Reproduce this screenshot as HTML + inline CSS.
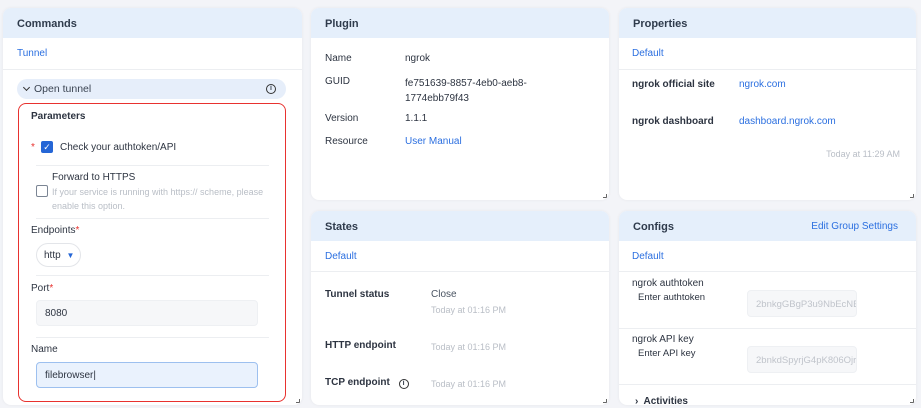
<!DOCTYPE html><html><head><meta charset="utf-8"><style>
*{box-sizing:border-box;margin:0;padding:0}
body{width:921px;height:408px;background:#f3f4f8;font-family:"Liberation Sans",sans-serif;font-size:10px;color:#2d3441;position:relative;overflow:hidden}
.p{position:absolute;background:#fff;border-radius:8px;overflow:hidden;box-shadow:0 0 3px rgba(0,0,0,.06)}
.h{height:30px;background:#e5effb;font-weight:bold;font-size:11px;color:#2f3b4c;padding:9px 14px 0;line-height:14px}
.a{position:absolute;white-space:nowrap;line-height:12px}
.b{color:#2b6fe0}
.g{color:#b9bec6;font-size:9px}
.d{position:absolute;height:1px;background:#eceef1}
.bold{font-weight:bold}
.in{position:absolute;border-radius:4px;background:#f6f7f9;border:1px solid #eef0f3}
.info{display:inline-block;width:10px;height:10px;border:1.3px solid #333;border-radius:50%;font-size:7px;text-align:center;line-height:8px;font-weight:bold}
.rz{position:absolute;right:2px;bottom:2px;width:4px;height:4px;border-right:1px solid #666;border-bottom:1px solid #666}
</style></head><body>

<div class="p" style="left:3px;top:8px;width:299px;height:397px">
<div class="h">Commands</div>
<div class="a b" style="left:14px;top:40px">Tunnel</div>
<div class="d" style="left:0;right:0;top:61px"></div>
<div class="a" style="left:14px;top:71px;width:269px;height:20px;background:#e6eefa;border-radius:10px;padding:4px 0 0 5px;color:#3b4452;font-size:10.5px"><span style="display:inline-block;width:5px;height:5px;border-right:1.5px solid #333;border-bottom:1.5px solid #333;transform:rotate(45deg);margin:0 5px 2px 2px"></span>Open tunnel<span class="info" style="position:absolute;right:10px;top:5px">i</span></div>
<div class="a" style="left:15px;top:95px;width:268px;height:299px;border:1.5px solid #e8322f;border-radius:8px"></div>
<div class="a bold" style="left:28px;top:103px">Parameters</div>
<div class="a" style="left:28px;top:134px;color:#e8322f">*</div>
<div class="a" style="left:38px;top:133px;width:12px;height:12px;background:#2566d6;border-radius:2px;color:#fff;font-size:9px;text-align:center;line-height:12px">✓</div>
<div class="a" style="left:57px;top:134px">Check your authtoken/API</div>
<div class="d" style="left:33px;width:233px;top:157px"></div>
<div class="a" style="left:49px;top:164px">Forward to HTTPS</div>
<div class="a" style="left:33px;top:177px;width:12px;height:12px;border:1.3px solid #7b8594;border-radius:2px"></div>
<div class="a g" style="left:49px;top:177px;line-height:14px">If your service is running with https:// scheme, please<br>enable this option.</div>
<div class="d" style="left:33px;width:233px;top:210px"></div>
<div class="a" style="left:28px;top:217px">Endpoints<span style="color:#e8322f">*</span></div>
<div class="a" style="left:33px;top:235px;width:45px;height:24px;border:1px solid #e3e5e9;border-radius:12px;padding:6px 0 0 7px">http <span style="color:#2566d6;font-size:8px;margin-left:3px">▼</span></div>
<div class="d" style="left:33px;width:233px;top:267px"></div>
<div class="a" style="left:28px;top:275px">Port<span style="color:#e8322f">*</span></div>
<div class="in" style="left:33px;top:292px;width:222px;height:26px;padding:7px 8px">8080</div>
<div class="d" style="left:33px;width:233px;top:329px"></div>
<div class="a" style="left:28px;top:336px">Name</div>
<div class="in" style="left:33px;top:354px;width:222px;height:26px;padding:7px 8px;background:#eaf2fd;border-color:#9dc0ef">filebrowser|</div>
<div class="rz"></div>
</div>

<div class="p" style="left:311px;top:8px;width:298px;height:192px">
<div class="h">Plugin</div>
<div class="a" style="left:14px;top:45px">Name</div><div class="a" style="left:94px;top:45px">ngrok</div>
<div class="a" style="left:14px;top:68px">GUID</div><div class="a" style="left:94px;top:68px;line-height:15px">fe751639-8857-4eb0-aeb8-<br>1774ebb79f43</div>
<div class="a" style="left:14px;top:105px">Version</div><div class="a" style="left:94px;top:105px">1.1.1</div>
<div class="a" style="left:14px;top:128px">Resource</div><div class="a b" style="left:94px;top:128px">User Manual</div>
<div class="rz"></div>
</div>

<div class="p" style="left:311px;top:211px;width:298px;height:194px">
<div class="h">States</div>
<div class="a b" style="left:14px;top:40px">Default</div>
<div class="d" style="left:0;right:0;top:60px"></div>
<div class="a bold" style="left:14px;top:78px">Tunnel status</div><div class="a" style="left:120px;top:78px;color:#4a5462">Close</div><div class="a g" style="left:120px;top:93px">Today at 01:16 PM</div>
<div class="a bold" style="left:14px;top:129px">HTTP endpoint</div><div class="a g" style="left:120px;top:130px">Today at 01:16 PM</div>
<div class="a bold" style="left:14px;top:166px">TCP endpoint <span class="info" style="margin-left:6px">i</span></div><div class="a g" style="left:120px;top:167px">Today at 01:16 PM</div>
<div class="rz"></div>
</div>

<div class="p" style="left:619px;top:8px;width:297px;height:192px">
<div class="h">Properties</div>
<div class="a b" style="left:13px;top:40px">Default</div>
<div class="d" style="left:0;right:0;top:61px"></div>
<div class="a bold" style="left:13px;top:71px">ngrok official site</div><div class="a b" style="left:120px;top:71px">ngrok.com</div>
<div class="a bold" style="left:13px;top:108px">ngrok dashboard</div><div class="a b" style="left:120px;top:108px">dashboard.ngrok.com</div>
<div class="a g" style="right:16px;top:140px">Today at 11:29 AM</div>
<div class="rz"></div>
</div>

<div class="p" style="left:619px;top:211px;width:297px;height:194px">
<div class="h">Configs<span class="b" style="position:absolute;right:18px;font-weight:normal;font-size:10px">Edit Group Settings</span></div>
<div class="a b" style="left:13px;top:40px">Default</div>
<div class="d" style="left:0;right:0;top:60px"></div>
<div class="a" style="left:13px;top:67px">ngrok authtoken</div>
<div class="a" style="left:19px;top:81px;font-size:9.5px">Enter authtoken</div>
<div class="in" style="left:128px;top:79px;width:110px;height:27px;padding:8px 8px;color:#c0c4cb;overflow:hidden;white-space:nowrap;font-size:9.5px">2bnkgGBgP3u9NbEcNE</div>
<div class="d" style="left:0;right:0;top:117px"></div>
<div class="a" style="left:13px;top:123px">ngrok API key</div>
<div class="a" style="left:19px;top:137px;font-size:9.5px">Enter API key</div>
<div class="in" style="left:128px;top:135px;width:110px;height:27px;padding:8px 8px;color:#c0c4cb;overflow:hidden;white-space:nowrap;font-size:9.5px">2bnkdSpyrjG4pK806Ojr</div>
<div class="d" style="left:0;right:0;top:173px"></div>
<div class="a bold" style="left:16px;top:185px">›&nbsp; Activities</div>
<div class="rz"></div>
</div>
</body></html>
